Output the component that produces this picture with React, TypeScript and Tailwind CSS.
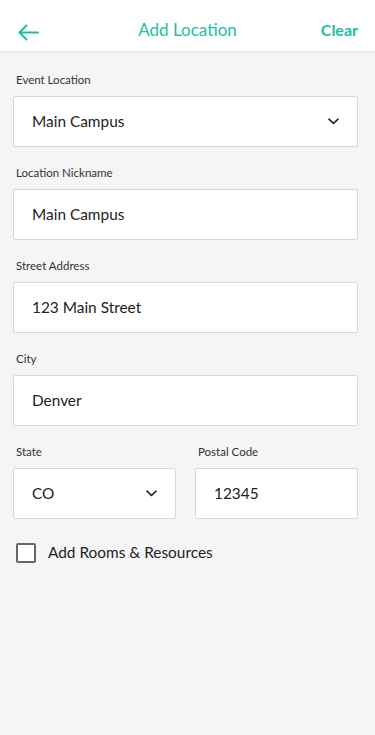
import { FC } from "react";

const font = { fontFamily: "Lato, 'Noto Sans', sans-serif" };

const Chevron: FC = () => (
  <svg width="11" height="7" viewBox="0 0 11 7" fill="none">
    <path d="M1 1.2l4.5 4.3L10 1.2" stroke="#222" strokeWidth="1.6" strokeLinecap="round" strokeLinejoin="round" />
  </svg>
);

interface FieldProps {
  label: string;
  value: string;
  select?: boolean;
  className?: string;
}

const Field: FC<FieldProps> = ({ label, value, select, className }) => (
  <div className={className}>
    <div className="pl-[3px] text-[11.5px] leading-4 text-[#333] mb-2">{label}</div>
    <div className="h-[51px] bg-white border border-[#d9d9d9] rounded-[2px] flex items-center justify-between pl-[18px] pr-[18px]">
      <span className="text-[15.4px] text-[#222]">{value}</span>
      {select && <Chevron />}
    </div>
  </div>
);

export default function App() {
  return (
    <div className="w-[375px] h-[735px] bg-[#f5f5f5] flex flex-col" style={font}>
      {/* Header */}
      <div className="h-[53px] pt-[8px] bg-white border-b-[2px] border-[#ebebeb] flex items-center justify-between pl-[18px] pr-[17px] relative">
        <svg className="mt-[5px]" width="21" height="17" viewBox="0 0 21 17" fill="none">
          <path d="M20 8.5H2M8.5 1.5L1.5 8.5l7 7" stroke="#1dbf9f" strokeWidth="2" strokeLinecap="round" strokeLinejoin="round" />
        </svg>
        <div className="absolute left-0 right-0 text-center text-[17px] text-[#1dbf9f] pointer-events-none">Add Location</div>
        <button className="text-[16px] font-bold text-[#1dbf9f]">Clear</button>
      </div>

      {/* Form */}
      <div className="pt-[19px] pl-[13px] pr-[17px] flex flex-col gap-[18px]">
        <Field label="Event Location" value="Main Campus" select />
        <Field label="Location Nickname" value="Main Campus" />
        <Field label="Street Address" value="123 Main Street" />
        <Field label="City" value="Denver" />
        <div className="flex gap-[19px]">
          <Field label="State" value="CO" select className="flex-1" />
          <Field label="Postal Code" value="12345" className="flex-1" />
        </div>
        <label className="flex items-center gap-3 pl-[3px] mt-[4px]">
          <span className="w-5 h-5 border-2 border-[#666] rounded-[2px] bg-white" />
          <span className="text-[15.4px] text-[#222]">Add Rooms &amp; Resources</span>
        </label>
      </div>
    </div>
  );
}
